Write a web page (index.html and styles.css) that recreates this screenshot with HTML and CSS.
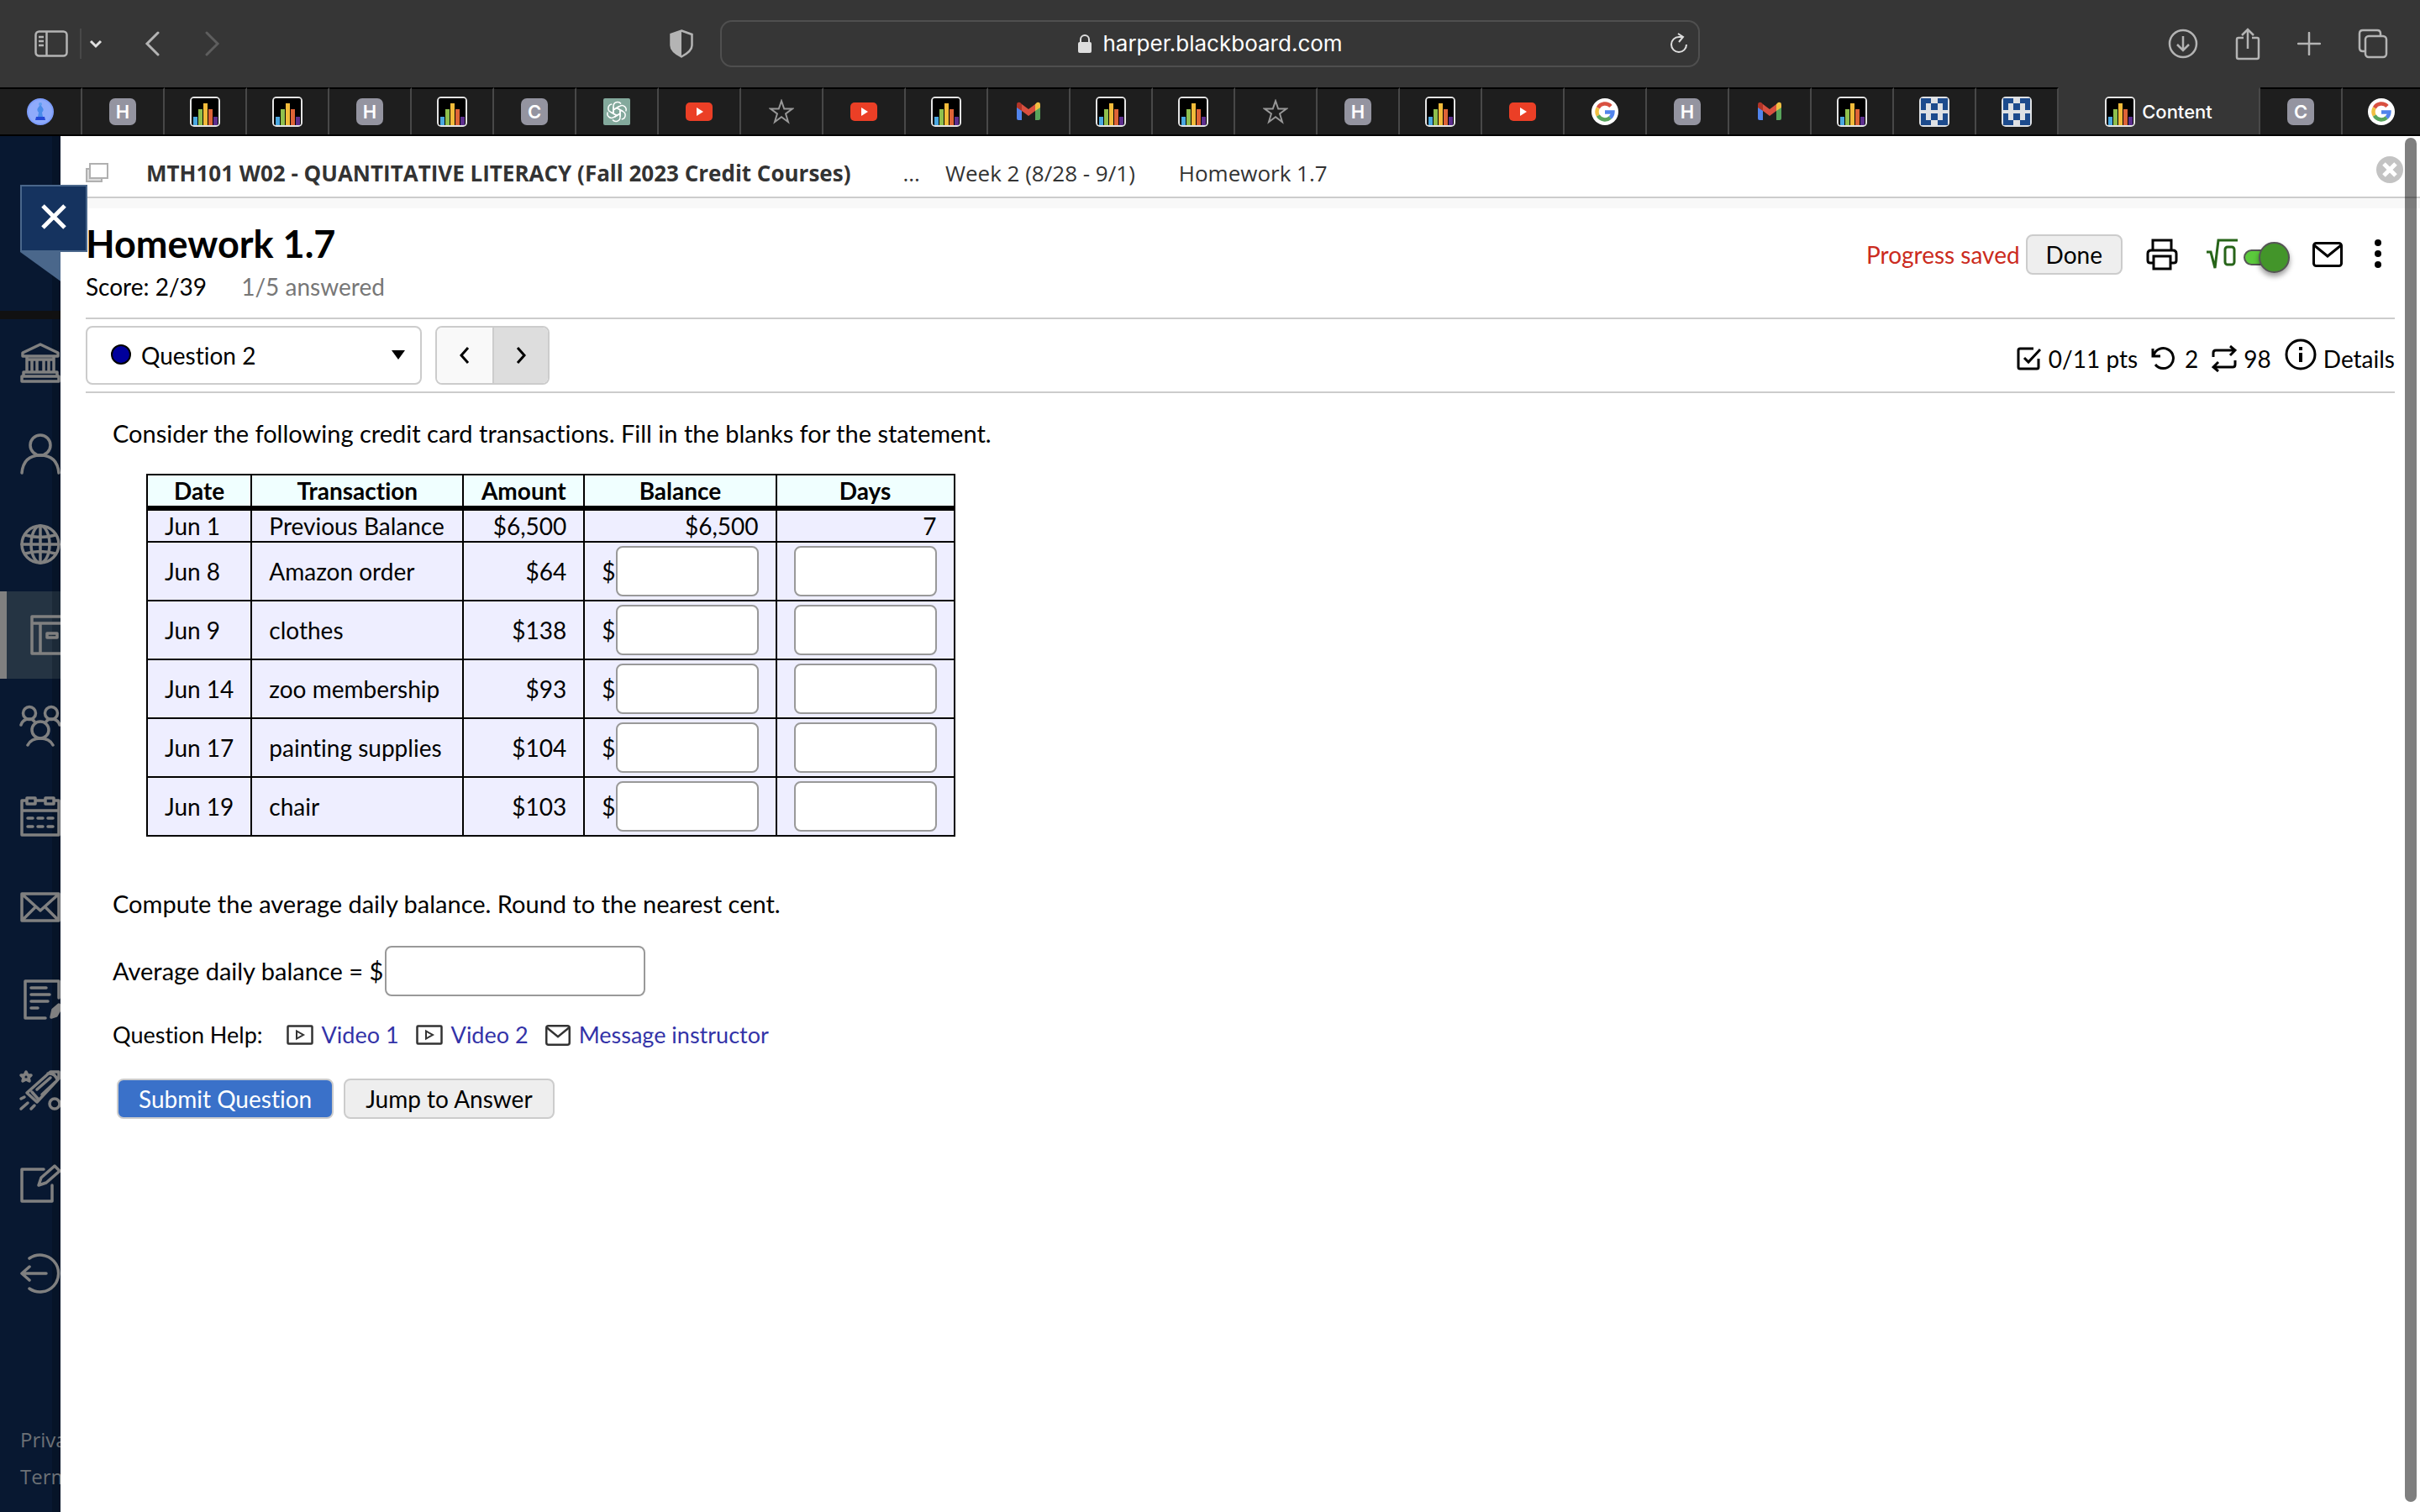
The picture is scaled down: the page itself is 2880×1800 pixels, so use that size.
FILE: index.html
```html
<!DOCTYPE html>
<html lang="en">
  <head>
    <meta charset="UTF-8" />
    <meta name="viewport" content="width=device-width, initial-scale=1.0" />
    <title>Content</title>
    <link rel="stylesheet" href="styles.css">
  </head>
  <body>
    <!-- shared icons -->
    <svg class="sprite" aria-hidden="true">
      <symbol id="bb" viewBox="0 0 36 36">
        <rect width="36" height="36" rx="5" fill="#e4e4e4" />
        <rect x="2" y="2" width="32" height="32" rx="2" fill="#000" />
        <path d="M4 24h5v10H4z" fill="#4aa8e0" />
        <path d="M10 15h5v19h-5z" fill="#8fbf4d" />
        <path d="M16 8h5v26h-5z" fill="#f2bb3a" />
        <path d="M22 15h5v19h-5z" fill="#de6336" />
        <path d="M28 24h5v10h-5z" fill="#5d2f8e" />
      </symbol>
      <symbol id="yt" viewBox="0 0 32 24">
        <rect y="1" width="32" height="22" rx="5" fill="#eb3f26" />
        <path d="M13 7l8 5-8 5z" fill="#fff" />
      </symbol>
      <symbol id="gmail" viewBox="0 0 30 24">
        <path d="M1 4v16q0 2 2 2h4V10z" fill="#5184ec" />
        <path d="M29 4v16q0 2-2 2h-4V10z" fill="#58a55c" />
        <path d="M7 3l8 6 8-6v8l-8 6-8-6z" fill="#d95040" />
        <path d="M1 4q0-4 4-3l2 2v8L1 7z" fill="#b13427" />
        <path d="M29 4q0-4-4-3l-2 2v8l6-4z" fill="#f1bf42" />
      </symbol>
      <symbol id="star" viewBox="0 0 28 28">
        <path d="M14 2l3 8.800h9l-7.300 5.400 2.800 9.300-7.500-5.600-7.500 5.600 2.800-9.300L2 10.800h9z" fill="none" stroke="#989898" stroke-width="1.800" />
      </symbol>
      <symbol id="google" viewBox="0 0 32 32">
        <circle cx="16" cy="16" r="16" fill="#fff" />
        <g fill="none" stroke-width="4.500">
          <path d="M23 9.500A9.500 9.500 0 0 0 7.800 11.300" stroke="#d95040" />
          <path d="M7.800 11.300a9.500 9.500 0 0 0 0 9.400" stroke="#f1bf42" />
          <path d="M7.800 20.700a9.500 9.500 0 0 0 14.500 2.300" stroke="#58a55c" />
          <path d="M22.300 23a9 9 0 0 0 3.100-6.500H16" stroke="#5184ec" />
        </g>
      </symbol>
      <symbol id="harper" viewBox="0 0 36 36">
        <rect width="36" height="36" rx="5" fill="#dfe1e4" />
        <path d="M2 2h12v6H8v8H2zM22 2h12v14h-6V8h-6zM2 20h6v8h6v6H2zM28 20h6v14H22v-6h6zM14 8h8v8h-8zM14 20h8v8h-8z" fill="#1d4b8d" />
      </symbol>
      <symbol id="mail" viewBox="0 0 36 30">
        <rect x="1.500" y="1.500" width="33" height="27" rx="3" fill="none" stroke="currentColor" stroke-width="3" />
        <path d="M2 4l16 13L34 4" fill="none" stroke="currentColor" stroke-width="3" />
      </symbol>
      <symbol id="video" viewBox="0 0 32 24">
        <rect x="1.500" y="1.500" width="29" height="21" rx="1" fill="none" stroke="currentColor" stroke-width="2.500" />
        <path d="M12 7.500v9l8-4.500z" fill="none" stroke="currentColor" stroke-width="2" />
      </symbol>
    </svg>

    <header class="browser">
      <div class="toolbar">
        <div class="tools tools-left">
          <button class="tool" aria-label="Sidebar">
            <svg width="40" height="32" viewBox="0 0 40 32" fill="none" stroke="#b4b4b4" stroke-width="2.500"><rect x="1.500" y="1.500" width="37" height="29" rx="4" /><path d="M14.500 2v28M5 8h6M5 13h6M5 18h6" /></svg>
          </button>
          <span class="divider"></span>
          <button class="tool" aria-label="Tab groups">
            <svg width="16" height="36" viewBox="0 0 16 36" fill="none" stroke="#e0e0e0" stroke-width="3"><path d="M2 15l6 6 6-6" /></svg>
          </button>
          <button class="tool tool-back" aria-label="Back">
            <svg width="18" height="30" viewBox="0 0 18 30" fill="none" stroke="#b4b4b4" stroke-width="3" stroke-linecap="round"><path d="M16 2L3 15l13 13" /></svg>
          </button>
          <button class="tool tool-forward" aria-label="Forward">
            <svg width="18" height="30" viewBox="0 0 18 30" fill="none" stroke="#5e5e5e" stroke-width="3" stroke-linecap="round"><path d="M2 2l13 13L2 28" /></svg>
          </button>
          <button class="tool tool-shield" aria-label="Privacy report">
            <svg width="28" height="34" viewBox="0 0 28 34"><path d="M14 1.500L26.500 6v13q0 7-12.500 13.500Q1.500 26 1.500 19V6z" fill="none" stroke="#b4b4b4" stroke-width="2.500" /><path d="M14 1L1 6v13q0 8 13 14z" fill="#b4b4b4" /></svg>
          </button>
        </div>
        <div class="address">
          <span class="url">
            <svg width="18" height="24" viewBox="0 0 18 24"><path d="M4 11V7a5 5 0 0 1 10 0v4" fill="none" stroke="#dedede" stroke-width="2" /><rect x="1" y="10" width="16" height="13" rx="2" fill="#dedede" /></svg>
            harper.blackboard.com
          </span>
          <button class="tool reload" aria-label="Reload">
            <svg width="22" height="26" viewBox="0 0 22 26" fill="none" stroke="#dedede" stroke-width="2"><path d="M20 14a9 9 0 1 1-9-9h4M10 1l6 4-5 6" /></svg>
          </button>
        </div>
        <div class="tools tools-right">
          <button class="tool" aria-label="Downloads">
            <svg width="36" height="36" viewBox="0 0 36 36" fill="none" stroke="#b4b4b4" stroke-width="2.500"><circle cx="18" cy="18" r="16" /><path d="M18 9v17M11 19l7 7 7-7" /></svg>
          </button>
          <button class="tool" aria-label="Share">
            <svg width="30" height="40" viewBox="0 0 30 40" fill="none" stroke="#b4b4b4" stroke-width="2.500"><path d="M10 13H4q-2 0-2 2v21q0 2 2 2h22q2 0 2-2V15q0-2-2-2h-6M15 26V3M8 10l7-7 7 7" /></svg>
          </button>
          <button class="tool" aria-label="New tab">
            <svg width="28" height="28" viewBox="0 0 28 28" stroke="#b4b4b4" stroke-width="2.500" stroke-linecap="round"><path d="M14 1v26M1 14h26" /></svg>
          </button>
          <button class="tool" aria-label="Tab overview">
            <svg width="36" height="36" viewBox="0 0 36 36" fill="none" stroke="#b4b4b4" stroke-width="2.500"><path d="M9 27H6q-4 0-4-4V6q0-4 4-4h17q4 0 4 4v3" /><rect x="9" y="9" width="25" height="25" rx="4" /></svg>
          </button>
        </div>
      </div>

      <nav class="tabs" aria-label="Tabs">
        <a class="tab" href="#"><svg width="32" height="32" viewBox="0 0 32 32"><circle cx="16" cy="16" r="16" fill="#7d9dfa" /><circle cx="16" cy="16" r="14" fill="#8fabfb" /><circle cx="16" cy="7" r="2" fill="#5f9df0" /><path d="M16 8q6 5 2 9l1 5H13l1-5q-4-4 2-9z" fill="#4a8cea" /><path d="M11 22h10l1 4H10z" fill="#2449d8" /></svg></a>
        <a class="tab" href="#"><span class="letter">H</span></a>
        <a class="tab" href="#"><svg class="fav"><use href="#bb" /></svg></a>
        <a class="tab" href="#"><svg class="fav"><use href="#bb" /></svg></a>
        <a class="tab" href="#"><span class="letter">H</span></a>
        <a class="tab" href="#"><svg class="fav"><use href="#bb" /></svg></a>
        <a class="tab" href="#"><span class="letter">C</span></a>
        <a class="tab" href="#"><svg width="32" height="32" viewBox="0 0 32 32"><rect width="32" height="32" rx="2" fill="#83a99c" /><g fill="none" stroke="#fff" stroke-width="1.500"><path id="petal" d="M12 18V9.500a5 5 0 0 1 9-3M12.500 13.500l6.500-4" /><use href="#petal" transform="rotate(60 16 16)" /><use href="#petal" transform="rotate(120 16 16)" /><use href="#petal" transform="rotate(180 16 16)" /><use href="#petal" transform="rotate(240 16 16)" /><use href="#petal" transform="rotate(300 16 16)" /></g></svg></a>
        <a class="tab" href="#"><svg width="32" height="24"><use href="#yt" /></svg></a>
        <a class="tab" href="#"><svg width="30" height="30"><use href="#star" /></svg></a>
        <a class="tab" href="#"><svg width="32" height="24"><use href="#yt" /></svg></a>
        <a class="tab" href="#"><svg class="fav"><use href="#bb" /></svg></a>
        <a class="tab" href="#"><svg width="30" height="24"><use href="#gmail" /></svg></a>
        <a class="tab" href="#"><svg class="fav"><use href="#bb" /></svg></a>
        <a class="tab" href="#"><svg class="fav"><use href="#bb" /></svg></a>
        <a class="tab" href="#"><svg width="30" height="30"><use href="#star" /></svg></a>
        <a class="tab" href="#"><span class="letter">H</span></a>
        <a class="tab" href="#"><svg class="fav"><use href="#bb" /></svg></a>
        <a class="tab" href="#"><svg width="32" height="24"><use href="#yt" /></svg></a>
        <a class="tab" href="#"><svg width="32" height="32"><use href="#google" /></svg></a>
        <a class="tab" href="#"><span class="letter">H</span></a>
        <a class="tab" href="#"><svg width="30" height="24"><use href="#gmail" /></svg></a>
        <a class="tab" href="#"><svg class="fav"><use href="#bb" /></svg></a>
        <a class="tab" href="#"><svg class="fav"><use href="#harper" /></svg></a>
        <a class="tab" href="#"><svg class="fav"><use href="#harper" /></svg></a>
        <a class="tab tab-active" href="#"><svg class="fav"><use href="#bb" /></svg>Content</a>
        <a class="tab" href="#"><span class="letter">C</span></a>
        <a class="tab" href="#"><svg width="32" height="32"><use href="#google" /></svg></a>
      </nav>
    </header>

    <div class="page">
      <aside class="sidebar">
        <div class="sidebar-logo"></div>
        <nav class="sidebar-nav" aria-label="Main">
          <a class="side-item" href="#" aria-label="Institution"><svg viewBox="0 0 48 48"><path d="M24 2L3 12v4h42v-4zM8 16v4h32v-4M8 20v14M14 20v14M20 20v14M28 20v14M34 20v14M40 20v14M4 40v-5h40v5M2 40h44v6H2z" /></svg></a>
          <a class="side-item" href="#" aria-label="Profile"><svg viewBox="0 0 48 48"><circle cx="24" cy="14" r="12" /><path d="M2 47q2-21 22-21t22 21" /></svg></a>
          <a class="side-item" href="#" aria-label="Activity"><svg viewBox="0 0 48 48"><circle cx="24" cy="24" r="22" /><ellipse cx="24" cy="24" rx="11" ry="22" /><path d="M24 2v44M2 24h44M6 13q18 5 36 0M6 35q18-5 36 0" /></svg></a>
          <a class="side-item side-active" href="#" aria-label="Courses"><svg viewBox="0 0 48 48"><path d="M2 2h44v44H2zM2 10h44M12 10v36M20 22h12v5H20z" /></svg></a>
          <a class="side-item" href="#" aria-label="Organizations"><svg viewBox="0 0 48 48"><circle cx="11" cy="9" r="7.500" /><circle cx="37" cy="9" r="7.500" /><circle cx="24" cy="29" r="10" /><path d="M1 23q2-7 10-7 4 0 6 3M47 23q-2-7-10-7-4 0-6 3M9 47q4-8 15-8t15 8" /></svg></a>
          <a class="side-item" href="#" aria-label="Calendar"><svg viewBox="0 0 48 48"><path d="M8 5H2v41h44V5h-6M20 5h8M2 17h44M8 2h10v7H8zM30 2h10v7H30zM9 26h6M21 26h6M33 26h6M9 36h6M21 36h6M33 36h6" /></svg></a>
          <a class="side-item" href="#" aria-label="Messages"><svg viewBox="0 0 48 48"><path d="M2 8h44v32H2zM4 10l20 18L44 10M4 38l14-14M44 38L30 24" /></svg></a>
          <a class="side-item" href="#" aria-label="Grades"><svg viewBox="0 0 48 48"><path d="M30 48H6V4h40v20M13 12h18M13 20h22M13 28h20M13 36h8" /><path d="M37 47l2-9 7-6 3 3-6 10z" fill="#808080" /></svg></a>
          <a class="side-item" href="#" aria-label="Tools"><svg viewBox="0 0 48 48"><path d="M8 29L36 4h10v8L20 40zM14 28l8 9M20 25l16-14M26 31l16-15M33 6q9-1 11 8M7 4l2 4h4l-3 3 1 4-4-2-4 2 1-4-3-3h4zM1 36l4-2M1 48l8-7M13 48l4-4" /><circle cx="41" cy="42" r="6" /></svg></a>
          <a class="side-item" href="#" aria-label="Assist"><svg viewBox="0 0 48 48"><path d="M28 12H2v38h36V31M22 31l3-9L41 8l6 6-16 14z" /></svg></a>
          <a class="side-item" href="#" aria-label="Sign out"><svg viewBox="0 0 48 48"><path d="M11 10a22 22 0 1 1 0 36M31 28H3M11 20l-9 8 9 8" /></svg></a>
        </nav>
        <div class="sidebar-footer">
          <a href="#">Privacy</a>
          <a href="#">Terms</a>
        </div>
        <div class="fold"></div>
      </aside>
      <button class="close-panel" aria-label="Close panel">
        <svg width="32" height="32" viewBox="0 0 32 32" stroke="#fff" stroke-width="5"><path d="M3 3l26 26M29 3L3 29" /></svg>
      </button>

      <main class="panel">
        <div class="crumbs">
          <svg width="28" height="24" viewBox="0 0 28 24" fill="#fff" stroke="#b0b0b0" stroke-width="2"><path d="M1 7h18v15H1z" fill="#ddd" /><path d="M5 1h21v17H5z" /></svg>
          <a class="crumb-course" href="#">MTH101 W02 - QUANTITATIVE LITERACY (Fall 2023 Credit Courses)</a>
          <span class="crumb-more">...</span>
          <a class="crumb-week" href="#">Week 2 (8/28 - 9/1)</a>
          <span>Homework 1.7</span>
          <button class="crumb-close" aria-label="Close">
            <svg width="32" height="32" viewBox="0 0 32 32"><circle cx="16" cy="16" r="16" fill="#c3c3c3" /><path d="M9 9l14 14M23 9L9 23" stroke="#fff" stroke-width="5" /></svg>
          </button>
        </div>

        <div class="assess">
          <div class="assess-head">
            <div>
              <h1>Homework 1.7</h1>
              <p class="score">Score: 2/39 <span class="answered">1/5 answered</span></p>
            </div>
            <div class="actions">
              <div class="save">
                <span class="saved">Progress saved</span>
                <button class="btn">Done</button>
              </div>
              <button class="icon-btn" aria-label="Print">
                <svg width="38" height="38" viewBox="0 0 38 38" fill="none" stroke="#000" stroke-width="3"><path d="M8 14V2h22v12M8 29H5q-3 0-3-3v-8q0-4 4-4h26q4 0 4 4v8q0 3-3 3h-3M9 21h20v15H9z" /></svg>
              </button>
              <label class="math">
                <svg width="44" height="38" viewBox="0 0 44 38" fill="none" stroke="#276419" stroke-width="3"><path d="M6 16h5l5 19 4-33h23" /><rect x="28" y="10" width="11" height="21" rx="3" /></svg>
                <input type="checkbox" class="toggle" aria-label="Math entry" checked>
              </label>
              <button class="icon-btn" aria-label="Messages"><svg width="36" height="30"><use href="#mail" /></svg></button>
              <button class="icon-btn" aria-label="More">
                <svg width="34" height="36" viewBox="0 0 34 36"><circle cx="14" cy="4" r="4" /><circle cx="14" cy="17" r="4" /><circle cx="14" cy="30" r="4" /></svg>
              </button>
            </div>
          </div>

          <div class="question-bar">
            <div class="picker">
              <span class="dot"></span>
              <select aria-label="Question">
                <option>Question 2</option>
              </select>
              <span class="caret"></span>
            </div>
            <div class="pager">
              <button aria-label="Previous question"><svg width="12" height="20" viewBox="0 0 12 20"><path d="M10 1L2 10l8 9" /></svg></button>
              <button class="next" aria-label="Next question"><svg width="12" height="20" viewBox="0 0 12 20"><path d="M2 1l8 9-8 9" /></svg></button>
            </div>
            <div class="details">
              <span class="detail"><svg width="30" height="28" viewBox="0 0 30 28"><path d="M20 2H4q-2 0-2 2v20q0 2 2 2h20q2 0 2-2V14M9 13l5 5L28 3" /></svg>0/11 pts</span>
              <span class="detail"><svg width="32" height="28" viewBox="0 0 32 28"><path d="M2 2v9h9M3 10a12 12 0 1 1 2 11" /></svg>2</span>
              <span class="detail"><svg width="30" height="32" viewBox="0 0 30 32"><path d="M2 14V9q0-3 3-3h22M22 1l6 5-6 6M28 18v5q0 3-3 3H3M8 20l-6 6 6 5" /></svg>98</span>
              <a class="detail" href="#"><svg class="info" width="38" height="38" viewBox="0 0 38 38"><circle cx="19" cy="19" r="17" /><path d="M19 17v11M19 10v4" stroke-width="4" /></svg>Details</a>
            </div>
          </div>

          <form class="question">
            <p>Consider the following credit card transactions. Fill in the blanks for the statement.</p>
            <table>
              <thead>
                <tr>
                  <th class="col-date">Date</th>
                  <th class="col-name">Transaction</th>
                  <th class="col-amount">Amount</th>
                  <th class="col-balance">Balance</th>
                  <th class="col-days">Days</th>
                </tr>
              </thead>
              <tbody>
                <tr class="first"><td>Jun 1</td><td>Previous Balance</td><td class="num">$6,500</td><td class="num">$6,500</td><td class="num">7</td></tr>
                <tr><td>Jun 8</td><td>Amazon order</td><td class="num">$64</td><td><label class="money">$<input type="text"></label></td><td><input type="text" aria-label="Days, Jun 8"></td></tr>
                <tr><td>Jun 9</td><td>clothes</td><td class="num">$138</td><td><label class="money">$<input type="text"></label></td><td><input type="text" aria-label="Days, Jun 9"></td></tr>
                <tr><td>Jun 14</td><td>zoo membership</td><td class="num">$93</td><td><label class="money">$<input type="text"></label></td><td><input type="text" aria-label="Days, Jun 14"></td></tr>
                <tr><td>Jun 17</td><td>painting supplies</td><td class="num">$104</td><td><label class="money">$<input type="text"></label></td><td><input type="text" aria-label="Days, Jun 17"></td></tr>
                <tr><td>Jun 19</td><td>chair</td><td class="num">$103</td><td><label class="money">$<input type="text"></label></td><td><input type="text" aria-label="Days, Jun 19"></td></tr>
              </tbody>
            </table>
            <p>Compute the average daily balance. Round to the nearest cent.</p>
            <label class="average">Average daily balance = $<input type="text"></label>
            <div class="help">
              <span>Question Help:</span>
              <a href="#"><svg width="32" height="24"><use href="#video" /></svg>Video 1</a>
              <a href="#"><svg width="32" height="24"><use href="#video" /></svg>Video 2</a>
              <a href="#"><svg width="30" height="25"><use href="#mail" /></svg>Message instructor</a>
            </div>
            <div class="submit">
              <button type="button" class="btn btn-primary">Submit Question</button>
              <button type="button" class="btn">Jump to Answer</button>
            </div>
          </form>
        </div>
      </main>
      <div class="scrollbar"></div>
    </div>
  </body>
</html>
```
FILE: styles.css
```css
* {
  box-sizing: border-box;
}

body {
  margin: 0;
  min-height: 100vh;
  display: flex;
  flex-direction: column;
  font-family: "Trebuchet MS", Lato, sans-serif;
  font-size: 28px;
  font-variant-ligatures: none;
  line-height: 36px;
  color: #000;
  background-color: #fff;
}

button,
input,
select {
  font: inherit;
  font-variant-ligatures: none;
  color: inherit;
}

button {
  padding: 0;
  border: none;
  background: none;
  cursor: pointer;
}

a {
  color: inherit;
  text-decoration: none;
}

svg {
  display: block;
  flex: none;
}

h1,
p {
  margin: 0;
}

.sprite {
  position: absolute;
  width: 0;
  height: 0;
}

/* browser bar */
.browser {
  font-family: Inter, sans-serif;
  color: #fff;
  background-color: #363636;
}

.toolbar {
  display: grid;
  grid-template-columns: 1fr 1166px 1fr;
  align-items: center;
  height: 104px;
}

.tools {
  display: flex;
  align-items: center;
}

.tools-left {
  padding: 0 32px 0 41px;
}

.divider {
  width: 2px;
  height: 36px;
  margin: 0 9px 0 14px;
  background-color: #484848;
}

.tool-back {
  margin-left: 50px;
}

.tool-forward {
  margin-left: 54px;
}

.tool-shield {
  margin-left: auto;
}

.tools-right {
  justify-content: flex-end;
  gap: 44px;
  padding-right: 38px;
}

.address {
  display: flex;
  align-items: center;
  height: 56px;
  padding: 0 12px 0 34px;
  border: 2px solid #4f4f4f;
  border-radius: 14px;
}

.url {
  flex: 1;
  display: flex;
  justify-content: center;
  align-items: center;
  gap: 12px;
  font-size: 26px;
}

.tabs {
  display: flex;
  height: 58px;
  border-bottom: 2px solid #000;
}

.tab {
  flex: 0 0 98px;
  display: flex;
  align-items: center;
  justify-content: center;
  gap: 8px;
  border-top: 2px solid #000;
  border-right: 2px solid #484848;
  background-color: #1e1e1e;
  font-size: 22px;
  font-weight: 500;
}

.tab-active {
  flex-basis: 240px;
  border-top-color: #363636;
  background-color: #363636;
}

.tab:last-child {
  flex: 1;
  border-right: none;
}

.fav {
  width: 36px;
  height: 36px;
}

.letter {
  width: 32px;
  height: 32px;
  border-radius: 7px;
  background-color: #9494a0;
  font-weight: 600;
  line-height: 33px;
  text-align: center;
}

/* page */
.page {
  flex: 1;
  position: relative;
  display: flex;
}

.sidebar {
  flex: 0 0 72px;
  position: relative;
  display: flex;
  flex-direction: column;
  overflow: hidden;
  background: linear-gradient(to right, #081831 62px, #061428 62px);
}

.sidebar-logo {
  height: 218px;
  border-bottom: 10px solid #111;
}

.side-item {
  display: flex;
  align-items: center;
  height: 104px;
  margin-bottom: 4px;
  padding-left: 24px;
}

.side-item svg {
  width: 48px;
  height: 48px;
  overflow: visible;
  fill: none;
  stroke: #808080;
  stroke-width: 3.500;
  stroke-linejoin: round;
  stroke-linecap: round;
}

.side-active {
  padding-left: 28px;
  border-left: 8px solid #808080;
  background: linear-gradient(to right, #253443 54px, #1c2a38 54px);
}

.sidebar-footer {
  display: flex;
  flex-direction: column;
  margin-top: auto;
  padding: 0 0 20px 24px;
  font-family: "Open Sans", sans-serif;
  font-size: 24px;
  line-height: 44px;
  color: #6c7176;
}

.fold {
  position: absolute;
  top: 138px;
  left: 24px;
  width: 80px;
  height: 58px;
  background-color: #4a678b;
  clip-path: polygon(0 0, 100% 0, 100% 100%);
}

.close-panel {
  position: absolute;
  top: 58px;
  left: 24px;
  display: grid;
  place-items: center;
  width: 80px;
  height: 80px;
  padding-bottom: 4px;
  border: 2px solid #4a678b;
  background-color: #15335f;
}

.panel {
  flex: 1;
}

.scrollbar {
  position: absolute;
  top: 2px;
  right: 4px;
  bottom: 12px;
  width: 14px;
  border-radius: 7px;
  background-color: rgba(0, 0, 0, 0.5);
}

/* breadcrumbs */
.crumbs {
  display: flex;
  align-items: center;
  height: 86px;
  padding: 14px 20px 0 30px;
  border-bottom: 12px solid #f8f8f8;
  box-shadow: inset 0 -2px #ccc;
  font-family: "Open Sans", sans-serif;
  font-size: 26px;
  color: #333;
}

.crumb-course {
  margin-left: 44px;
  font-weight: 700;
}

.crumb-more {
  margin: 0 30px 0 62px;
}

.crumb-week {
  margin-right: 52px;
}

.crumb-close {
  margin: 0 0 8px auto;
}

/* assessment header */
.assess {
  padding: 0 30px;
}

.assess-head {
  display: flex;
  align-items: flex-start;
  justify-content: space-between;
  padding: 16px 0 19px;
  border-bottom: 2px solid #ccc;
}

h1 {
  margin-bottom: 7px;
  font-size: 45px;
  line-height: 52px;
}

.answered {
  margin-left: 34px;
  color: #777;
}

.actions {
  display: flex;
  align-items: center;
  gap: 28px;
  margin-top: 15px;
}

.save {
  display: flex;
  align-items: center;
  gap: 7px;
}

.saved {
  color: #cb2b20;
}

.btn {
  height: 48px;
  padding: 0 24px;
  border: 2px solid #ccc;
  border-radius: 8px;
  background-color: #eee;
}

.save .btn {
  padding: 0 22px;
}

.btn-primary {
  background-color: #3a71c9;
  color: #fff;
}

.math {
  display: flex;
  align-items: center;
  gap: 6px;
}

.toggle {
  appearance: none;
  display: flex;
  align-items: center;
  justify-content: flex-end;
  width: 54px;
  height: 19px;
  margin: 6px 0 0;
  border: 2px solid #555;
  border-radius: 10px;
  background-color: #5bc93c;
}

.toggle::before {
  content: "";
  flex: none;
  width: 33px;
  height: 33px;
  margin-right: -3px;
  border: 2px solid #555;
  border-radius: 50%;
  background-color: #43952a;
  box-shadow: 0 4px 6px rgba(0, 0, 0, 0.4);
}

.question-bar {
  display: flex;
  align-items: center;
  gap: 16px;
  padding: 8px 0;
  border-bottom: 2px solid #ccc;
}

.picker {
  position: relative;
  width: 400px;
}

.picker select {
  appearance: none;
  width: 100%;
  height: 70px;
  padding: 0 40px 0 64px;
  border: 2px solid #ccc;
  border-radius: 8px;
  background-color: #fff;
}

.dot {
  position: absolute;
  top: 22px;
  left: 30px;
  width: 24px;
  height: 24px;
  border: 2px solid #000;
  border-radius: 50%;
  background-color: #00009c;
}

.caret {
  position: absolute;
  top: 29px;
  right: 20px;
  border: 8px solid transparent;
  border-top: 11px solid #000;
  border-bottom: none;
}

.pager {
  display: flex;
  height: 70px;
  border: 2px solid #ccc;
  border-radius: 8px;
  overflow: hidden;
}

.pager button {
  display: grid;
  place-items: center;
  width: 66px;
  background-color: #f9f9f9;
}

.pager .next {
  border-left: 2px solid #ccc;
  background-color: #ddd;
}

.pager svg,
.details svg {
  fill: none;
  stroke: #000;
  stroke-width: 3;
}

.details {
  display: flex;
  gap: 16px;
  margin-left: auto;
  padding-top: 8px;
}

.detail {
  display: flex;
  align-items: center;
  gap: 8px;
}

.details .info {
  margin-bottom: 10px;
}

/* question */
.question {
  padding: 30px 32px 0;
}

.question p,
.average {
  font-size: 29px;
}

table {
  margin: 30px 0 62px 40px;
  border-collapse: collapse;
}

th,
td {
  height: 40px;
  padding: 0 20px;
  border: 2px solid #000;
  line-height: 32px;
  white-space: nowrap;
}

th {
  border-bottom-width: 6px;
  background-color: #f0ffff;
}

td {
  height: 70px;
  background-color: #eef;
}

.first td {
  height: 40px;
}

.col-date {
  width: 124px;
}

.col-name {
  width: 252px;
}

.col-amount {
  width: 144px;
}

.col-balance {
  width: 226px;
}

.col-days {
  width: 212px;
}

.num {
  text-align: right;
}

.question input {
  display: block;
  width: 170px;
  height: 60px;
  padding: 0 8px;
  border: 2px solid #999;
  border-radius: 8px;
  background-color: #fff;
}

.money,
.average {
  display: flex;
  align-items: center;
  justify-content: space-between;
}

.average {
  justify-content: flex-start;
  gap: 2px;
  margin-top: 32px;
}

.average input {
  width: 310px;
}

.help {
  display: flex;
  gap: 20px;
  margin: 28px 0 34px;
  font-size: 27px;
}

.help a {
  display: flex;
  align-items: center;
  gap: 10px;
  color: #3333a8;
}

.help svg {
  color: #333;
}

.help span {
  margin-right: 8px;
}

.submit {
  display: flex;
  gap: 12px;
  padding-left: 5px;
}
```
